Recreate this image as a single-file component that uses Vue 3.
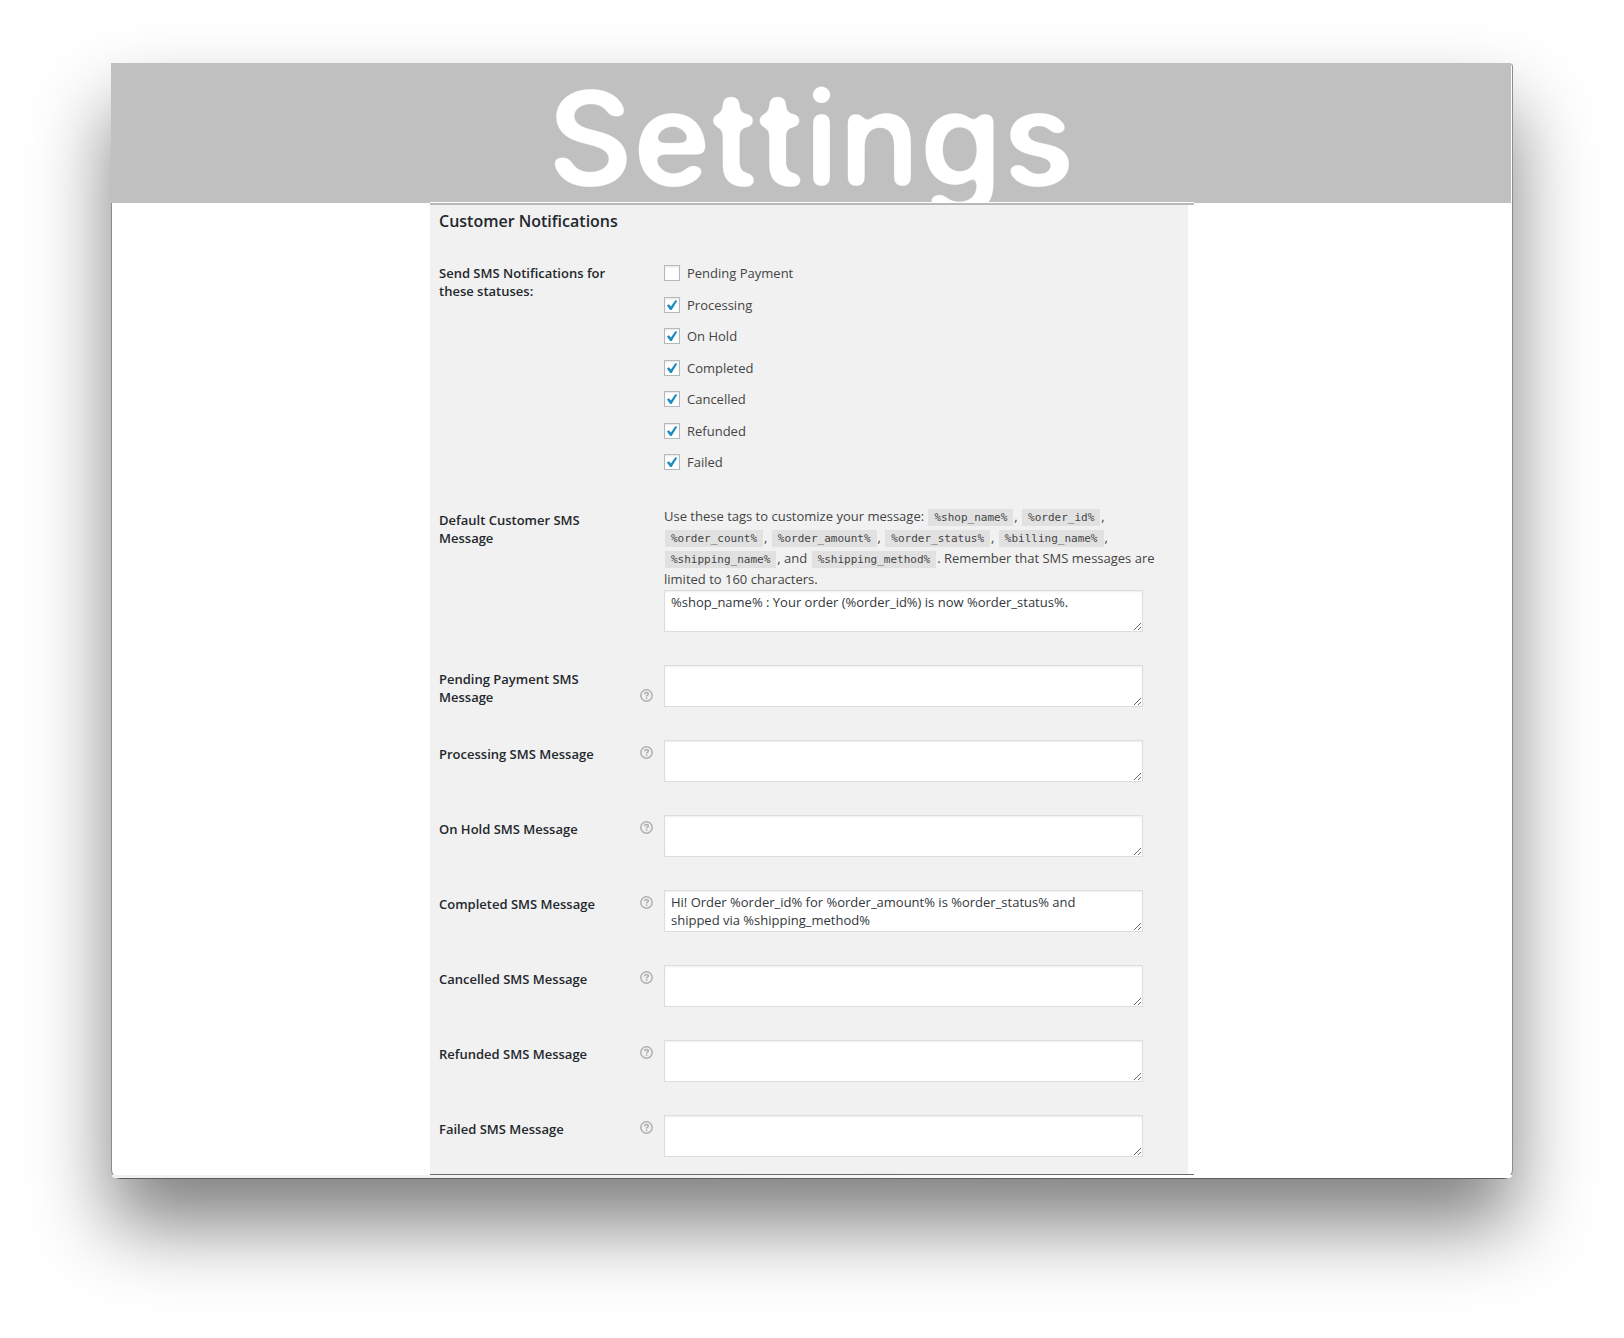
<template>
  <div class="page">
    <main class="window">
      <header class="banner">
        <h1><span>Set</span><span>tings</span></h1>
      </header>

      <form class="panel" @submit.prevent>
        <div class="panel-body">
          <h2>Customer Notifications</h2>

          <div class="row" role="group" aria-labelledby="statuses-label">
            <div class="row-head">
              <span id="statuses-label" class="label">Send SMS Notifications for these statuses:</span>
            </div>
            <div class="statuses">
              <label v-for="status in statuses" :key="status.name" class="status">
                <input v-model="status.checked" type="checkbox" />
                <span>{{ status.name }}</span>
              </label>
            </div>
          </div>

          <div class="row">
            <div class="row-head">
              <label class="label" for="sms-default">Default Customer SMS Message</label>
            </div>
            <div class="field">
              <p class="description">
                Use these tags to customize your message: <code>%shop_name%</code>,
                <code>%order_id%</code>, <code>%order_count%</code>,
                <code>%order_amount%</code>, <code>%order_status%</code>,
                <code>%billing_name%</code>, <code>%shipping_name%</code>, and
                <code>%shipping_method%</code>. Remember that SMS messages are limited to 160
                characters.
              </p>
              <textarea id="sms-default" v-model="defaultMessage" rows="2" spellcheck="false"></textarea>
            </div>
          </div>

          <div v-for="item in messages" :key="item.id" class="row">
            <div class="row-head">
              <label class="label" :for="item.id">{{ item.label }}</label>
              <button type="button" class="help" aria-label="Help">
                <svg viewBox="0 0 13 13" width="13" height="13" fill="none" stroke="currentColor">
                  <circle cx="6.5" cy="6.5" r="5.7" stroke-width="1.5" />
                  <path d="M4.7 5.2c0-1.1.8-1.7 1.8-1.7s1.8.6 1.8 1.5c0 1.2-1.7 1.2-1.7 2.5" stroke-width="1.6" />
                  <path d="M6.6 8.4v1.5" stroke-width="1.6" />
                </svg>
              </button>
            </div>
            <div class="field">
              <textarea :id="item.id" v-model="item.text" rows="2" spellcheck="false"></textarea>
            </div>
          </div>
        </div>
      </form>

      <div class="window-foot"></div>
    </main>

    <!-- softens the corners of the banner lettering -->
    <svg class="defs" width="0" height="0" aria-hidden="true">
      <filter id="rounded" x="-5%" y="-5%" width="110%" height="110%" color-interpolation-filters="sRGB">
        <feGaussianBlur stdDeviation="4" />
        <feColorMatrix values="0 0 0 0 1  0 0 0 0 1  0 0 0 0 1  0 0 0 10 -4.5" />
      </filter>
    </svg>
  </div>
</template>

<script setup>
import { ref } from "vue";

const statuses = ref([
  { name: "Pending Payment", checked: false },
  { name: "Processing", checked: true },
  { name: "On Hold", checked: true },
  { name: "Completed", checked: true },
  { name: "Cancelled", checked: true },
  { name: "Refunded", checked: true },
  { name: "Failed", checked: true },
]);

const defaultMessage = ref("%shop_name% : Your order (%order_id%) is now %order_status%.");

const messages = ref([
  { id: "sms-pending", label: "Pending Payment SMS Message", text: "" },
  { id: "sms-processing", label: "Processing SMS Message", text: "" },
  { id: "sms-on-hold", label: "On Hold SMS Message", text: "" },
  {
    id: "sms-completed",
    label: "Completed SMS Message",
    text: "Hi! Order %order_id% for %order_amount% is %order_status% and shipped via %shipping_method%",
  },
  { id: "sms-cancelled", label: "Cancelled SMS Message", text: "" },
  { id: "sms-refunded", label: "Refunded SMS Message", text: "" },
  { id: "sms-failed", label: "Failed SMS Message", text: "" },
]);
</script>

<style>
body {
  margin: 0;
  background: #fff;
}
</style>

<style scoped>
* {
  box-sizing: border-box;
}
.page {
  padding: 63px 111px 159px;
  font-family: "Open Sans", "Noto Sans", sans-serif;
  font-size: 13px;
  color: #444;
}
.window {
  background: #fff;
  border: 1px solid #8c8c8c;
  border-top-color: #c8c8c8;
  border-bottom-color: #5e5e5e;
  border-radius: 4px 4px 9px 9px;
  box-shadow: 0 46px 78px rgba(0, 0, 0, 0.5);
}
.banner {
  height: 140px;
  margin: -1px 1px 0 -1px;
  overflow: hidden;
  background: #c0c0c0;
}
h1 {
  display: flex;
  justify-content: center;
  margin: 0;
  font-family: Inter, "Liberation Sans", sans-serif;
  font-size: 132px;
  line-height: 150px;
  font-weight: 600;
  color: #fff;
}
/* filtered in two parts so that the arms of the two t's stay apart */
h1 span {
  filter: url(#rounded);
}
.panel {
  position: relative;
  max-width: 764px;
  margin: -1px auto 0;
  border-top: 1px solid #fff;
  border-bottom: 1px solid #6a6a6a;
}
.panel::before {
  content: "";
  display: block;
  height: 2px;
  background: #b8b8b8;
}
.panel-body {
  display: flex;
  flex-direction: column;
  gap: 33px;
  margin-right: 6px;
  padding: 5px 0 17px 9px;
  background: #f1f1f1;
}
h2 {
  margin: 0 0 -6px;
  font-size: 16px;
  line-height: 22px;
  font-weight: 600;
  color: #23282d;
}
.row {
  display: grid;
  grid-template-columns: 214px 1fr;
  column-gap: 11px;
  align-items: start;
}
.row-head {
  display: flex;
  justify-content: space-between;
  align-items: flex-end;
  padding-top: 5px;
}
.label {
  max-width: 190px;
  line-height: 18px;
  font-weight: 600;
  color: #23282d;
}
.help {
  display: flex;
  padding: 0 0 4px;
  border: 0;
  background: none;
  color: #b0b0b0;
  cursor: help;
}
.statuses {
  display: flex;
  flex-direction: column;
  align-items: flex-start;
  justify-content: space-between;
  height: 214px;
  padding-top: 3px;
}
.status {
  display: flex;
  align-items: center;
  gap: 7px;
  line-height: 22px;
}
input[type="checkbox"] {
  appearance: none;
  width: 16px;
  height: 16px;
  margin: 0;
  border: 1px solid #b4b9be;
  background: #fff;
  box-shadow: inset 0 1px 2px rgba(0, 0, 0, 0.1);
}
input[type="checkbox"]:checked {
  background: #fff
    url('data:image/svg+xml;utf8,<svg xmlns="http://www.w3.org/2000/svg" viewBox="0 0 14 14"><path d="M1.9 7.6l2-1.4 2 2.3 4.4-6.3 2 .5-5.7 9.3h-1.5z" fill="%231e8cbe"/></svg>')
    center / 14px 14px no-repeat;
}
.field {
  display: flex;
  flex-direction: column;
}
.description {
  max-width: 510px;
  margin: 0;
  line-height: 21px;
}
code {
  margin: 0 1px;
  padding: 2px 6px;
  font-family: "DejaVu Sans Mono", monospace;
  font-size: 11px;
  line-height: 13px;
  background: #e1e1e1;
}
textarea {
  width: 100%;
  max-width: 479px;
  height: 42px;
  margin: 0;
  padding: 2px 24px 2px 6px;
  border: 1px solid #ddd;
  border-radius: 0;
  outline: 0;
  background: #fff;
  box-shadow: inset 0 1px 2px rgba(0, 0, 0, 0.07);
  font: inherit;
  line-height: 18px;
  color: #32373c;
  resize: vertical;
}
.window-foot {
  height: 3px;
  border-radius: 0 0 8px 8px;
  background: linear-gradient(90deg, #f1f1f1 40%, #fff 70%);
}
.defs {
  position: absolute;
}
</style>
